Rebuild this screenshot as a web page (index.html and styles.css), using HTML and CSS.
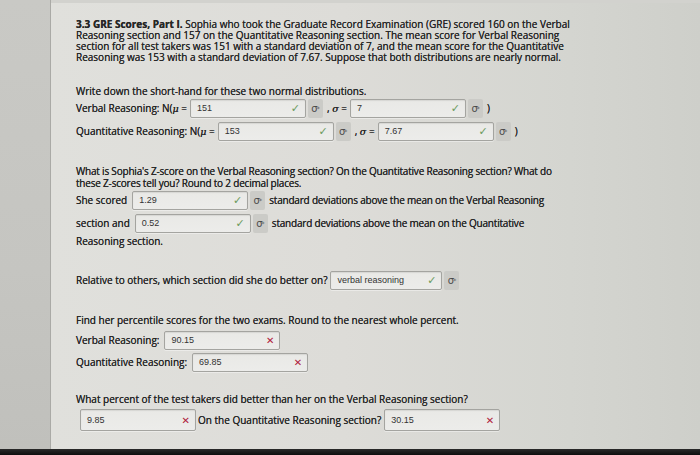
FILE: index.html
```html
<!DOCTYPE html>
<html>
<head>
<meta charset="utf-8">
<link rel="stylesheet" href="styles.css">
</head>
<body>
<div class="screen">
  <div class="sidebar"></div>
  <div class="main">
    <p class="intro"><b>3.3 GRE Scores, Part I.</b> Sophia who took the Graduate Record Examination (GRE) scored 160 on the Verbal<br>Reasoning section and 157 on the Quantitative Reasoning section. The mean score for Verbal Reasoning<br>section for all test takers was 151 with a standard deviation of 7, and the mean score for the Quantitative<br>Reasoning was 153 with a standard deviation of 7.67. Suppose that both distributions are nearly normal.</p>

    <p class="line q1">Write down the short-hand for these two normal distributions.</p>
    <div class="row r1">
      <span>Verbal Reasoning: N(<i class="m">μ</i> =</span>
      <span class="inp"><span class="val">151</span><span class="ok">✓</span></span>
      <span class="btn">σ<sup>*</sup></span>
      <span>, <i class="m">σ</i> =</span>
      <span class="inp"><span class="val">7</span><span class="ok">✓</span></span>
      <span class="btn">σ<sup>*</sup></span>
      <span>)</span>
    </div>
    <div class="row r2">
      <span>Quantitative Reasoning: N(<i class="m">μ</i> =</span>
      <span class="inp"><span class="val">153</span><span class="ok">✓</span></span>
      <span class="btn">σ<sup>*</sup></span>
      <span>, <i class="m">σ</i> =</span>
      <span class="inp"><span class="val">7.67</span><span class="ok">✓</span></span>
      <span class="btn">σ<sup>*</sup></span>
      <span>)</span>
    </div>

    <p class="line q2 tight">What is Sophia's Z-score on the Verbal Reasoning section? On the Quantitative Reasoning section? What do<br>these Z-scores tell you? Round to 2 decimal places.</p>
    <div class="row r3">
      <span class="lbl">She scored</span>
      <span class="inp"><span class="val">1.29</span><span class="ok">✓</span></span>
      <span class="btn">σ<sup>*</sup></span>
      <span class="tight">standard deviations above the mean on the Verbal Reasoning</span>
    </div>
    <div class="row r4">
      <span class="lbl">section and</span>
      <span class="inp"><span class="val">0.52</span><span class="ok">✓</span></span>
      <span class="btn">σ<sup>*</sup></span>
      <span class="tight">standard deviations above the mean on the Quantitative</span>
    </div>
    <p class="line q2b">Reasoning section.</p>

    <div class="row r5">
      <span>Relative to others, which section did she do better on?</span>
      <span class="inp sel"><span class="val">verbal reasoning</span><span class="ok">✓</span></span>
      <span class="btn">σ<sup>*</sup></span>
    </div>

    <p class="line q4">Find her percentile scores for the two exams. Round to the nearest whole percent.</p>
    <div class="row r6">
      <span class="lbl">Verbal Reasoning:</span>
      <span class="inp"><span class="val">90.15</span><span class="bad">✕</span></span>
    </div>
    <div class="row r7">
      <span class="lbl">Quantitative Reasoning:</span>
      <span class="inp"><span class="val">69.85</span><span class="bad">✕</span></span>
    </div>

    <p class="line q5">What percent of the test takers did better than her on the Verbal Reasoning section?</p>
    <div class="row r8">
      <span class="inp tall first"><span class="val">9.85</span><span class="bad">✕</span></span>
      <span>On the Quantitative Reasoning section?</span>
      <span class="inp tall"><span class="val">30.15</span><span class="bad">✕</span></span>
    </div>
  </div>
</div>
<div class="bezel"></div>
</body>
</html>
```
FILE: styles.css
```css
html, body {
  margin: 0;
  padding: 0;
}
body {
  width: 700px;
  height: 455px;
  overflow: hidden;
  display: flex;
  flex-direction: column;
  background: #1a1a1a;
  font-family: "Open Sans", "DejaVu Sans", sans-serif;
  color: #272727;
}
.screen {
  flex: 1;
  display: flex;
  min-height: 0;
}
.sidebar {
  width: 50px;
  background: linear-gradient(180deg, #c9c9c5 0%, #c5c5c1 60%, #c0c0bc 100%);
  border-right: 1px solid #aaaaa6;
  box-shadow: 1px 0 0 #d8d8d4;
}
.main {
  flex: 1;
  padding: 16px 0 0 25px;
  background: linear-gradient(90deg, #e0e0dc 0%, #dddcd8 45%, #d4d5d0 80%, #cecfca 100%);
  border-top: 3px solid #d2d2ce;
  font-size: 10px;
  line-height: 11px;
  text-shadow: 0 0 0.3px #272727;
}
p { margin: 0; }
.intro { line-height: 11px; }
.intro b { font-weight: 700; }
.line { line-height: 12px; }
.tight { letter-spacing: -0.2px; }
.q1 { margin-top: 22px; }
.q2 { margin-top: 24px; }
.q2b { margin-top: 2px; }
.q4 { margin-top: 24px; }
.q5 { margin-top: 21px; }

.row {
  display: flex;
  align-items: center;
  height: 20px;
  gap: 2px;
  white-space: nowrap;
}
.lbl { margin-right: 2px; }
.r1 { margin-top: 1px; }
.r2 { margin-top: 3px; }
.r3 { margin-top: 1px; }
.r4 { margin-top: 3px; }
.r5 { margin-top: 23px; }
.r6 { margin-top: 4px; }
.r7 { margin-top: 2px; }
.r8 { margin-top: 4px; height: 22px; }

.m { font-family: "DejaVu Serif", serif; font-style: italic; font-size: 9.5px; }

.inp {
  box-sizing: border-box;
  width: 116px;
  height: 19px;
  display: flex;
  align-items: center;
  justify-content: space-between;
  padding: 0 5px 0 6px;
  margin-left: 1px;
  background: linear-gradient(180deg, #e9e9e6 0%, #ececea 100%);
  border: 1px solid #a4a4a0;
  border-radius: 2px;
  box-shadow: inset 0 1px 1px rgba(0,0,0,0.08), 0 1px 0 rgba(255,255,255,0.4);
  text-shadow: none;
}
.inp.sel { width: 112px; }
.inp.tall { height: 22px; }
.inp.first { margin-left: 4px; }
.val {
  font-family: "Liberation Sans", Arial, sans-serif;
  font-size: 9px;
  color: #333;
}
.ok {
  color: #6a9a5c;
  font-family: "DejaVu Sans", sans-serif;
  font-size: 11px;
  font-weight: bold;
}
.bad {
  color: #b0203a;
  font-family: "DejaVu Sans", sans-serif;
  font-size: 10px;
  font-weight: bold;
}
.btn {
  box-sizing: border-box;
  width: 15px;
  height: 19px;
  display: flex;
  align-items: center;
  justify-content: center;
  background: #cbcbc7;
  border-radius: 2px;
  font-family: "DejaVu Sans", sans-serif;
  font-size: 10px;
  color: #4a4a4a;
  text-shadow: none;
  margin-right: 2px;
}
.btn sup { font-size: 6px; vertical-align: 4px; margin-left: -1px; }
.bezel {
  height: 6px;
  background: linear-gradient(180deg, #2a2a2a, #0e0e0e);
  flex: none;
}
```
